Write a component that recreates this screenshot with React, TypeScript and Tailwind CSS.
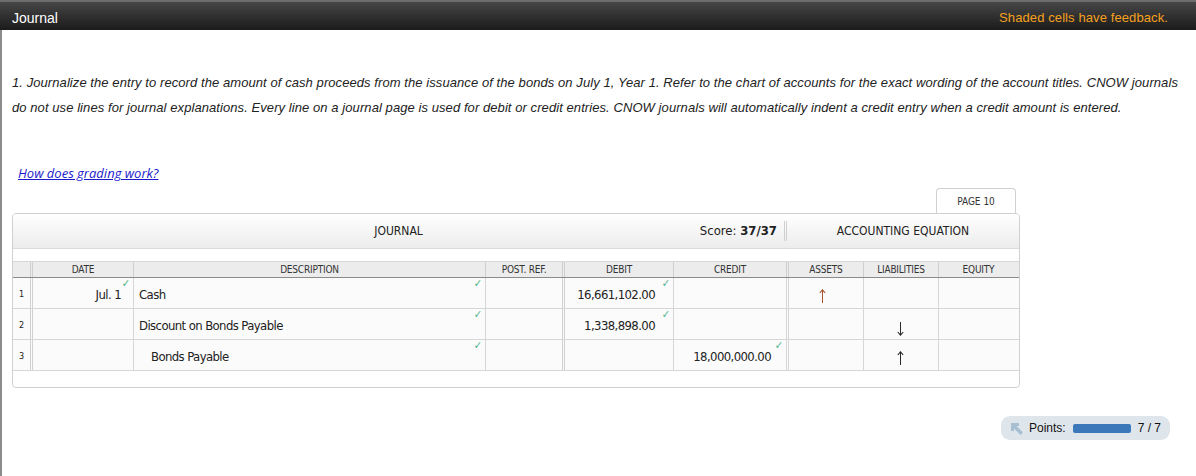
import type { ReactNode } from "react";

// Narrow humanist face for the journal grid; falls back to Roboto.
const gridFont = {
  fontFamily: '"Liberation Sans Narrow", "DejaVu Sans Condensed", Roboto, sans-serif',
};

function Arrow({ down, color = "#2a2a2a" }: { down?: boolean; color?: string }) {
  return (
    <svg
      width="7"
      height="14"
      viewBox="0 0 7 14"
      className={down ? "mt-[6px] rotate-180" : "mt-[2px]"}
    >
      <line x1="3.5" y1="1" x2="3.5" y2="14" stroke={color} strokeWidth="1" />
      <path d="M0.8 4 L3.5 0.8 L6.2 4" fill="none" stroke={color} strokeWidth="1.1" />
    </svg>
  );
}

type Row = {
  n: number;
  date?: string;
  account: string;
  indent?: boolean;
  debit?: string;
  credit?: string;
  assets?: ReactNode;
  liabilities?: ReactNode;
  checks: ("date" | "account" | "debit" | "credit")[];
};

const rows: Row[] = [
  {
    n: 1,
    date: "Jul. 1",
    account: "Cash",
    debit: "16,661,102.00",
    assets: <Arrow color="#a4532c" />,
    checks: ["date", "account", "debit"],
  },
  {
    n: 2,
    account: "Discount on Bonds Payable",
    debit: "1,338,898.00",
    liabilities: <Arrow down />,
    checks: ["account", "debit"],
  },
  {
    n: 3,
    account: "Bonds Payable",
    indent: true,
    credit: "18,000,000.00",
    liabilities: <Arrow />,
    checks: ["account", "credit"],
  },
];

const cols =
  "grid grid-cols-[20px_101px_352px_79px_109px_115px_75px_75px_79px]";

function Check() {
  return (
    <span className="pointer-events-none absolute right-[3px] top-[0px] text-[11px] leading-none tracking-normal text-[#4fb38b]">
      ✓
    </span>
  );
}

function Cell({
  children,
  className = "",
  check,
}: {
  children?: ReactNode;
  className?: string;
  check?: boolean;
}) {
  return (
    <div
      className={`relative flex items-center border-r border-[#d6d6d6] pt-[3px] ${className}`}
    >
      {children}
      {check && <Check />}
    </div>
  );
}

function JournalPanel() {
  return (
    <div className="w-[1008px]">
      <div className="flex justify-end pr-[4px]">
        <div
          className="flex h-[25px] w-[80px] items-center justify-center rounded-t-[4px] border border-b-0 border-[#d0d0d0] bg-white text-[10px] text-[#333]"
          style={gridFont}
        >
          PAGE 10
        </div>
      </div>
      <div
        className="overflow-hidden rounded-[4px] border border-[#d0d0d0] bg-white pb-[16px] text-[#222]"
        style={gridFont}
      >
        <div className="flex h-[35px] items-center border-b border-[#dcdcdc] bg-gradient-to-b from-white to-[#ececec]">
          <div className="relative flex h-full w-[771px] items-center justify-center text-[12px]">
            JOURNAL
            <span className="absolute right-[7px] text-[13px]">
              Score: <b className="font-semibold">37/37</b>
            </span>
          </div>
          <div className="h-[20px] w-[3px] border-x border-[#cfcfcf]" />
          <div className="flex flex-1 items-center justify-center text-[12px]">
            ACCOUNTING EQUATION
          </div>
        </div>

        <div className="h-[12px]" />

        <div
          className={`${cols} h-[17px] border-y border-t-[#d8d8d8] border-b-[#8a8a8a] bg-[#ececec] text-[10px] leading-[15px] tracking-[-0.2px] text-[#333]`}
        >
          <div className="border-r-[3px] border-double border-[#cfcfcf]" />
          <div className="border-r border-[#cfcfcf] text-center">DATE</div>
          <div className="border-r border-[#cfcfcf] text-center">DESCRIPTION</div>
          <div className="border-r-[3px] border-double border-[#cfcfcf] text-center">
            POST. REF.
          </div>
          <div className="border-r border-[#cfcfcf] text-center">DEBIT</div>
          <div className="border-r-[3px] border-double border-[#cfcfcf] text-center">
            CREDIT
          </div>
          <div className="border-r border-[#cfcfcf] text-center">ASSETS</div>
          <div className="border-r border-[#cfcfcf] text-center">LIABILITIES</div>
          <div className="text-center">EQUITY</div>
        </div>

        {rows.map((r) => (
          <div
            key={r.n}
            className={`${cols} h-[31px] border-b border-[#d6d6d6] bg-[#fbfbfb] text-[13px] tracking-[-0.6px]`}
          >
            <div className="flex items-center justify-center border-r-[3px] border-double border-[#d0d0d0] pt-[3px] text-[9px] tracking-normal">
              {r.n}
            </div>
            <Cell className="justify-end pr-[12px]" check={r.checks.includes("date")}>
              {r.date}
            </Cell>
            <Cell
              className={r.indent ? "pl-[17px]" : "pl-[5px]"}
              check={r.checks.includes("account")}
            >
              {r.account}
            </Cell>
            <div className="border-r-[3px] border-double border-[#d0d0d0]" />
            <Cell className="justify-end pr-[18px]" check={r.checks.includes("debit")}>
              {r.debit}
            </Cell>
            <Cell
              className="justify-end border-r-[3px] border-double pr-[15px]"
              check={r.checks.includes("credit")}
            >
              {r.credit}
            </Cell>
            <Cell className="justify-center pr-[8px]">{r.assets}</Cell>
            <Cell className="justify-center pr-[2px]">{r.liabilities}</Cell>
            <div />
          </div>
        ))}
      </div>
    </div>
  );
}

function PointsBadge() {
  return (
    <div className="flex h-[24px] items-center gap-[6px] rounded-[9px] bg-[#dfe6eb] pl-[10px] pr-[9px] text-[12px] text-[#111]">
      <svg width="12" height="12" viewBox="0 0 12 12" className="mt-[1px]">
        <polygon points="0,0 8,0 8,3 5.5,3 12,9.5 9.5,12 3,5.5 3,8 0,8" fill="#a8bfd1" />
      </svg>
      <span>Points:</span>
      <div className="ml-[1px] h-[9px] w-[58px] rounded-[2px] bg-[#3a78ba]" />
      <span className="ml-[1px]">7 / 7</span>
    </div>
  );
}

export default function App() {
  return (
    <div className="min-h-[476px] bg-white font-['Arial','Liberation_Sans',sans-serif]">
      <header className="flex h-[30px] items-center justify-between border-t-2 border-[#6d6d6d] bg-gradient-to-b from-[#474747] to-[#1b1b1b] pl-[12px] pr-[28px] pt-[4px]">
        <span className="text-[14px] text-white">Journal</span>
        <span className="text-[13px] tracking-[0.1px] text-[#f5a01e]">
          Shaded cells have feedback.
        </span>
      </header>

      <main className="min-h-[446px] border-l-2 border-[#8c8c8c] pl-[10px] pr-[12px] pt-[40px]">
        <p className="text-[13px] italic leading-[25px] tracking-[0.075px] text-[#222]">
          1. Journalize the entry to record the amount of cash proceeds from the issuance
          of the bonds on July 1, Year 1. Refer to the chart of accounts for the exact
          wording of the account titles. CNOW journals do not use lines for journal
          explanations. Every line on a journal page is used for debit or credit entries.
          CNOW journals will automatically indent a credit entry when a credit amount is
          entered.
        </p>

        <a
          href="#"
          className="ml-[6px] mt-[44px] inline-block font-['Open_Sans'] text-[13px] italic leading-[18px] text-[#1a1acc] underline"
        >
          How does grading work?
        </a>

        <div className="mt-[3px]">
          <JournalPanel />
        </div>

        <div className="mt-[28px] flex justify-end pr-[14px]">
          <PointsBadge />
        </div>
      </main>
    </div>
  );
}
